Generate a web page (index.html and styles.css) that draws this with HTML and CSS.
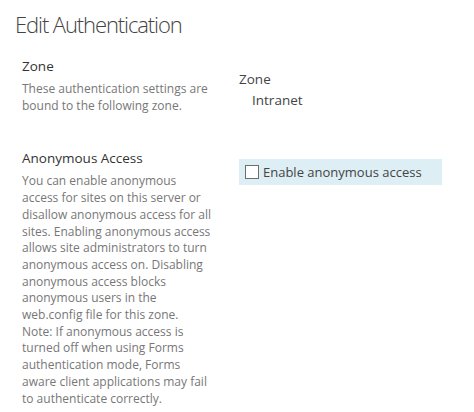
FILE: index.html
```html
<!doctype html>
<html lang="en">
<head>
  <meta charset="utf-8">
  <title>Edit Authentication</title>
  <link rel="stylesheet" href="styles.css">
</head>
<body>
  <main class="page">
    <h1 class="page-title">Edit Authentication</h1>

    <section class="setting setting-zone">
      <div class="setting-info">
        <h2>Zone</h2>
        <p>These authentication settings are bound to the following zone.</p>
      </div>
      <div class="setting-control">
        <div class="field-label">Zone</div>
        <div class="field-value">Intranet</div>
      </div>
    </section>

    <section class="setting setting-anon">
      <div class="setting-info">
        <h2>Anonymous Access</h2>
        <p>You can enable anonymous access for sites on this server or disallow anonymous access for all sites. Enabling anonymous access allows site administrators to turn anonymous access on. Disabling anonymous access blocks anonymous users in the web.config file for this zone.<br>Note: If anonymous access is turned off when using Forms authentication mode, Forms aware client applications may fail to authenticate correctly.</p>
      </div>
      <div class="setting-control">
        <label class="check-row"><input type="checkbox" class="check"><span>Enable anonymous access</span></label>
      </div>
    </section>
  </main>
</body>
</html>
```

FILE: styles.css
```css
body {
  background-color: white;
  color: #444;
  font-family: "Open Sans", "Noto Sans", sans-serif;
  margin: 0;
}
.page {
  padding: 8px 0 0 15px;
}
.page-title {
  color: #444;
  font-size: 22px;
  font-weight: 300;
  letter-spacing: -1.1px;
  line-height: 32px;
  margin: 0 0 16px 0;
}
.setting {
  display: grid;
  grid-template-columns: 190px 210px;
  column-gap: 27px;
  padding-left: 7px;
}
.setting-anon {
  margin-top: 34px;
}
h2 {
  color: #333;
  font-size: 13.5px;
  font-weight: normal;
  line-height: 20px;
  margin: 0;
}
.setting-info p {
  color: #777;
  font-size: 12px;
  line-height: 16.7px;
  margin: 5px 0 0 0;
}
.setting-zone .setting-control {
  padding-top: 13px;
}
.field-label {
  font-size: 13.5px;
  line-height: 20px;
}
.field-value {
  font-size: 13.5px;
  line-height: 22px;
  padding-left: 13px;
}
.setting-anon .setting-control {
  padding-top: 11px;
}
.check-row {
  align-items: center;
  background-color: #deeef5;
  box-sizing: border-box;
  display: flex;
  height: 26px;
  padding-left: 6px;
  width: 203px;
}
.check {
  appearance: none;
  background-color: white;
  border: 1px solid #6e6e6e;
  box-sizing: border-box;
  height: 14px;
  margin: 0 4px 0 0;
  width: 14px;
}
.check-row span {
  color: #444;
  font-size: 13px;
}
```
